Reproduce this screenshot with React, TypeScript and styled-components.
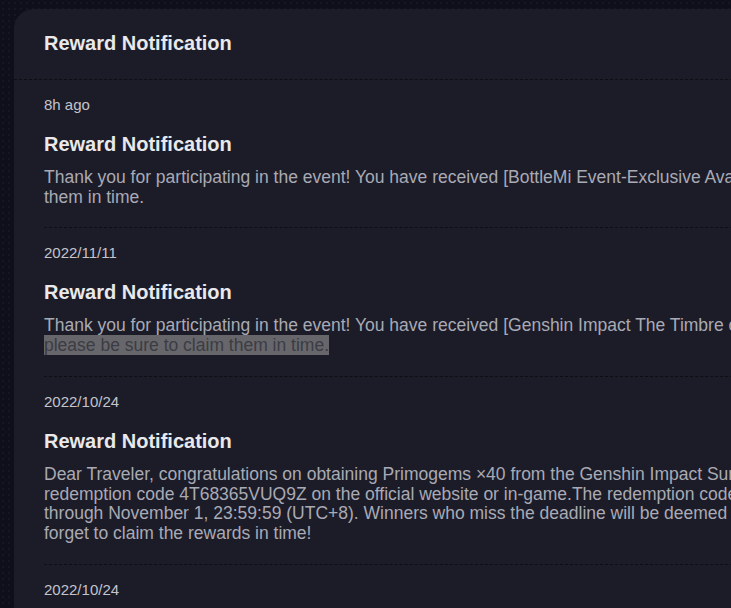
import React from "react";
import styled, { createGlobalStyle } from "styled-components";

const Global = createGlobalStyle`
  html, body {
    margin: 0;
    padding: 0;
    overflow: hidden;
    background-color: #0e0f1b;
    background-image: radial-gradient(rgba(255,255,255,0.03) 1px, transparent 1px);
    background-size: 6px 6px;
  }
  body {
    font-family: "Liberation Sans", Arial, sans-serif;
  }
`;

const Page = styled.div`
  padding: 9px 0 0 14px;
  width: 1300px;
`;

const Card = styled.section`
  width: 1200px;
  background-color: #1c1c29;
  border-radius: 20px;
`;

const Header = styled.header`
  padding: 22px 30px 24px;
  border-bottom: 1px dashed #0d0d14;
`;

const HeaderTitle = styled.h1`
  margin: 0;
  font-size: 20px;
  line-height: 24px;
  font-weight: 700;
  color: #e9e9ec;
`;

const List = styled.div`
  padding: 0 30px;
`;

const Item = styled.article`
  padding: 16px 0 20px;
  border-bottom: 1px dashed #0d0d14;
`;

const Time = styled.div`
  font-size: 15px;
  line-height: 17px;
  color: #c3c4cc;
`;

const Title = styled.h2`
  margin: 19px 0 12px;
  font-size: 20px;
  line-height: 24px;
  font-weight: 700;
  color: #e9e9ec;
`;

const Body = styled.p`
  margin: 0;
  font-size: 17.5px;
  line-height: 19.7px;
  color: #a9aab4;
  white-space: pre-line;
`;

const Selected = styled.span`
  background-color: #67676b;
  color: #3b3c44;
`;

type Note = {
  time: string;
  title: string;
  body: React.ReactNode;
};

const notes: Note[] = [
  {
    time: "8h ago",
    title: "Reward Notification",
    body:
      "Thank you for participating in the event! You have received [BottleMi Event-Exclusive Avatar Frame]. Please be sure to claim\nthem in time.",
  },
  {
    time: "2022/11/11",
    title: "Reward Notification",
    body: (
      <>
        {"Thank you for participating in the event! You have received [Genshin Impact The Timbre of Teyvat Event Rewards],\n"}
        <Selected>please be sure to claim them in time.</Selected>
      </>
    ),
  },
  {
    time: "2022/10/24",
    title: "Reward Notification",
    body:
      "Dear Traveler, congratulations on obtaining Primogems ×40 from the Genshin Impact Summer Fantasia event! Please use the\nredemption code 4T68365VUQ9Z on the official website or in-game.The redemption code is valid from October 24, 00:00:00\nthrough November 1, 23:59:59 (UTC+8). Winners who miss the deadline will be deemed to have given up the rewards. Don't\nforget to claim the rewards in time!",
  },
  {
    time: "2022/10/24",
    title: "Reward Notification",
    body:
      "Dear Traveler, congratulations on obtaining Primogems ×40 from the Genshin Impact event!",
  },
];

export default function App() {
  return (
    <>
      <Global />
      <Page>
        <Card>
          <Header>
            <HeaderTitle>Reward Notification</HeaderTitle>
          </Header>
          <List>
            {notes.map((n, i) => (
              <Item key={i}>
                <Time>{n.time}</Time>
                <Title>{n.title}</Title>
                <Body>{n.body}</Body>
              </Item>
            ))}
          </List>
        </Card>
      </Page>
    </>
  );
}
